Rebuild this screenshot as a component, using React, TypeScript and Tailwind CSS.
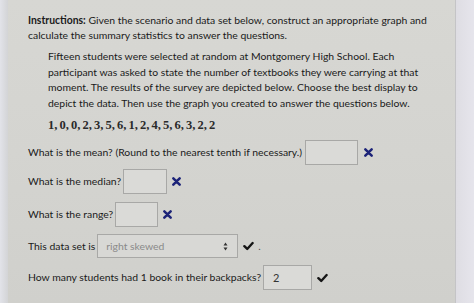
import React from "react";

const Cross = () => (
  <svg width="9" height="9" viewBox="0 0 10 10" className="shrink-0">
    <path d="M1.5 1.5 L8.5 8.5 M8.5 1.5 L1.5 8.5" stroke="#1c2378" strokeWidth="2.8" strokeLinecap="round" />
  </svg>
);

const Check = () => (
  <svg width="11" height="10" viewBox="0 0 12 10" className="shrink-0">
    <path d="M1.5 5.2 L4.6 8.2 L10.5 1.8" stroke="#151515" strokeWidth="2.6" fill="none" strokeLinecap="round" strokeLinejoin="round" />
  </svg>
);

const Box = ({ w, children }: { w: string; children?: React.ReactNode }) => (
  <div className={`${w} h-[25px] border border-[#a8a8a6] bg-[#dadad7] flex items-center pl-[9px] text-[11px] text-[#333]`}>
    {children}
  </div>
);

export default function App() {
  return (
    <div
      className="w-[474px] h-[303px] flex overflow-hidden bg-[#d5d5d1] text-[#1a1a1a]"
      style={{ fontFamily: 'Lato, "Noto Sans", sans-serif' }}
    >
      <div className="w-[8px] h-full bg-gradient-to-r from-[#e2e3e9] to-[#d3d4d6]" />
      <div className="flex-1 h-full whitespace-nowrap bg-gradient-to-b from-[#d7d7d3] via-[#d4d4d0] to-[#d0d0cc] pl-[20px] pt-[13px] text-[10.4px] leading-[15px]">
        <p>
          <span className="font-bold">Instructions:</span> Given the scenario and data set below, construct an appropriate graph and
          <br />
          calculate the summary statistics to answer the questions.
        </p>
        <p className="pl-[20px] mt-[6px] leading-[15.5px]">
          Fifteen students were selected at random at Montgomery High School. Each
          <br />
          participant was asked to state the number of textbooks they were carrying at that
          <br />
          moment. The results of the survey are depicted below. Choose the best display to
          <br />
          depict the data. Then use the graph you created to answer the questions below.
        </p>
        <p
          className="pl-[20px] mt-[5px] text-[12.5px] leading-[18px] font-bold text-[#2a2a2a] [word-spacing:-1px]"
          style={{ fontFamily: '"Liberation Serif", "DejaVu Serif", serif' }}
        >
          1, 0, 0, 2, 3, 5, 6, 1, 2, 4, 5, 6, 3, 2, 2
        </p>
        <div className="mt-[6px] flex items-center gap-[3px]">
          <span>What is the mean? (Round to the nearest tenth if necessary.)</span>
          <Box w="w-[53px]" />
          <span className="ml-[3px]"><Cross /></span>
        </div>
        <div className="mt-[4px] flex items-center gap-[2px]">
          <span>What is the median?</span>
          <Box w="w-[44px]" />
          <span className="ml-[3px]"><Cross /></span>
        </div>
        <div className="mt-[8px] flex items-center gap-[2px]">
          <span>What is the range?</span>
          <Box w="w-[43px]" />
          <span className="ml-[3px]"><Cross /></span>
        </div>
        <div className="mt-[7px] flex items-center gap-[2px]">
          <span>This data set is</span>
          <div className="w-[141px] h-[24px] border border-[#a8a8a6] bg-[#d8d8d5] flex items-center pl-[8px] pr-[9px] text-[#8a8a8a]">
            <span className="flex-1">right skewed</span>
            <svg width="5" height="9" viewBox="0 0 5 9">
              <path d="M2.5 0.5 L4.5 3.5 L0.5 3.5 Z M2.5 8.5 L4.5 5.5 L0.5 5.5 Z" fill="#333" />
            </svg>
          </div>
          <span className="ml-[3px]"><Check /></span>
          <span className="ml-[2px] text-[#555]">.</span>
        </div>
        <div className="mt-[7px] flex items-center gap-[2px]">
          <span>How many students had 1 book in their backpacks?</span>
          <Box w="w-[49px]">2</Box>
          <span className="ml-[3px]"><Check /></span>
        </div>
      </div>
      <div className="w-[19px] h-full border-l border-[#c4c4c6] bg-gradient-to-r from-[#dedde3] to-[#e6e5ec]" />
    </div>
  );
}
